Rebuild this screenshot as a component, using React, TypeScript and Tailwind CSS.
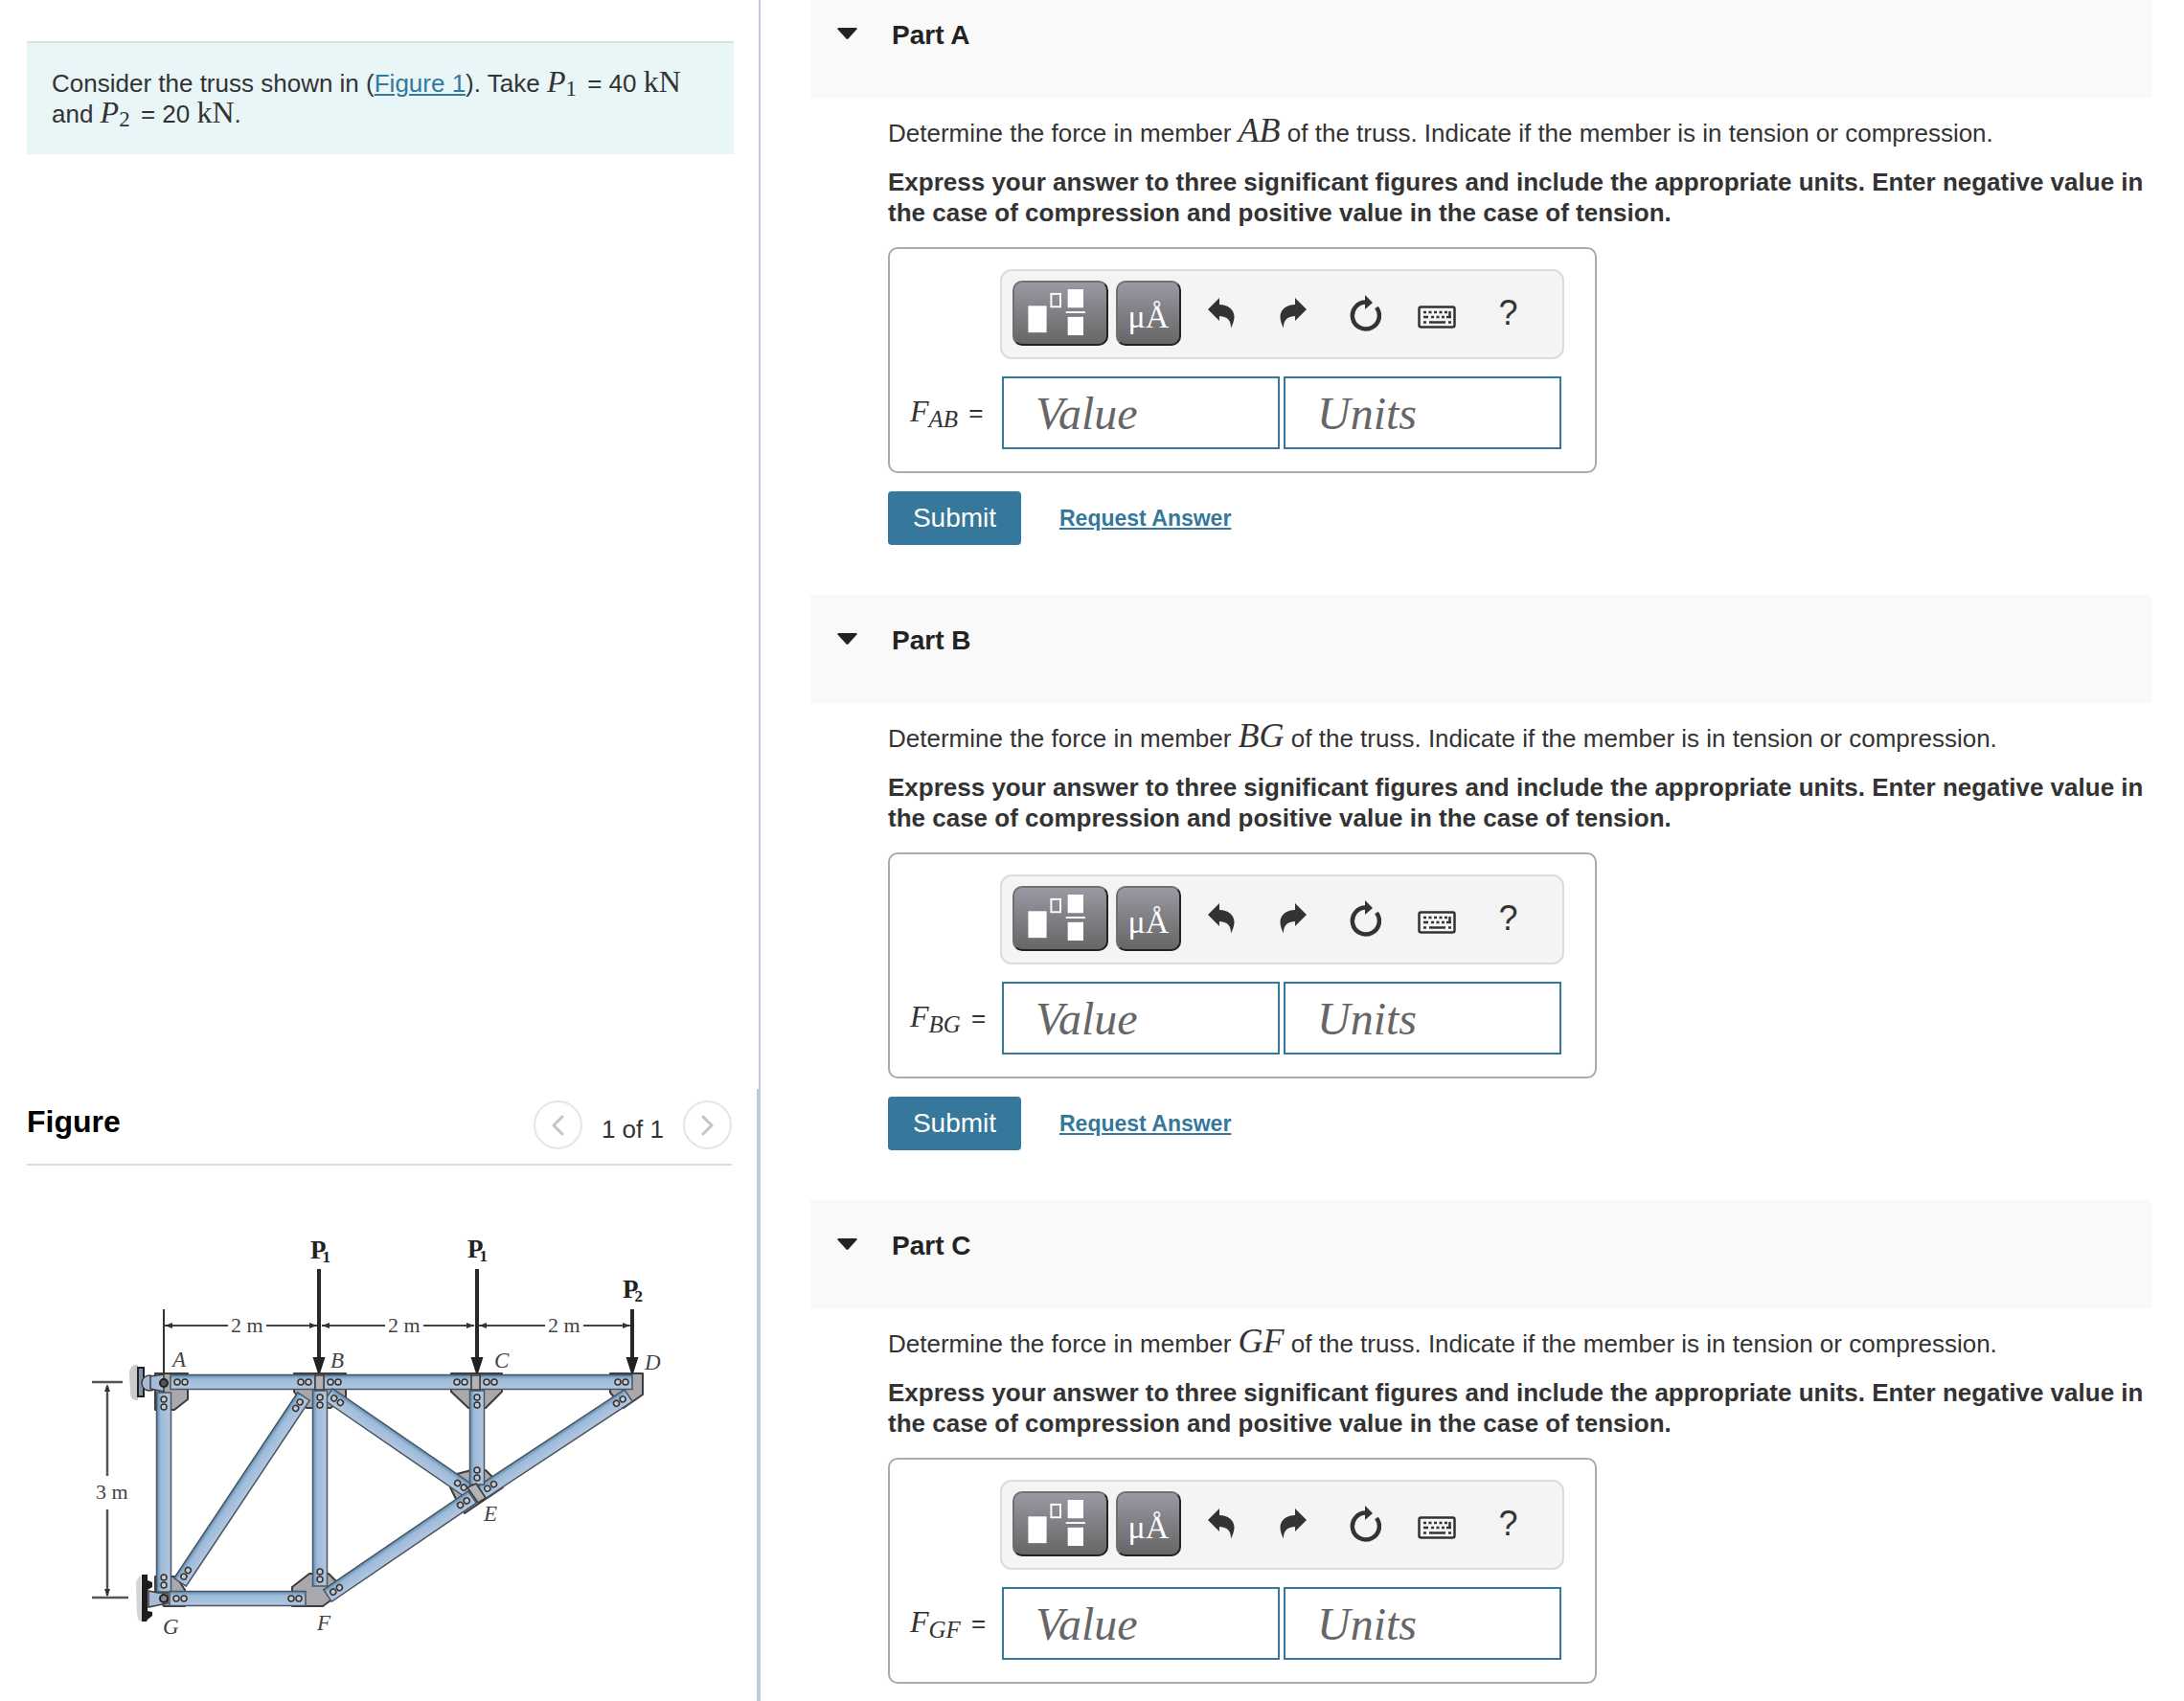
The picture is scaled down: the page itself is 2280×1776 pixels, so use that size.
import type { ReactNode } from "react";

type PartProps = {
  letter: string;
  member: string;
  actions?: boolean;
};

function Var({ children }: { children: ReactNode }) {
  return (
    <i className="font-['Liberation_Serif',serif] text-[36px] leading-[0]">{children}</i>
  );
}

function Load({ index, value }: { index: number; value: number }) {
  return (
    <span className="whitespace-nowrap">
      <i className="font-['Liberation_Serif',serif] text-[32px] leading-[0]">P</i>
      <sub className="-bottom-1 mr-1 font-['Liberation_Serif',serif] text-[23px]">{index}</sub> = {value}{" "}
      <span className="font-['Liberation_Serif',serif] text-[32px] leading-[0]">kN</span>
    </span>
  );
}

function TemplatesIcon() {
  return (
    <svg width="100" height="64" viewBox="0 0 100 64" fill="#fff" aria-hidden="true">
      <rect x="15" y="24" width="20" height="29" />
      <rect x="40" y="11" width="10" height="14" fill="none" stroke="#fff" strokeWidth="2" />
      <rect x="58" y="6" width="17" height="20" />
      <rect x="56" y="30" width="21" height="2" />
      <rect x="58" y="36" width="17" height="20" />
    </svg>
  );
}

function UndoIcon() {
  return (
    <svg width="28" height="32" viewBox="0 0 28 32" fill="#333" aria-hidden="true">
      <path d="M0 12 12 0v7c9 0 15 5 15.500 12 .2 4.500-1.500 8.500-3.500 12.500 .3-6-2-12-12-12.500v5z" />
    </svg>
  );
}

function RedoIcon() {
  return (
    <svg width="28" height="32" viewBox="0 0 28 32" fill="#333" aria-hidden="true">
      <path d="M28 12 16 0v7C7 7 1 12 .5 19c-.2 4.500 1.500 8.500 3.500 12.500-.3-6 2-12 12-12.500v5z" />
    </svg>
  );
}

function ResetIcon() {
  return (
    <svg width="34" height="38" viewBox="0 0 34 38" aria-hidden="true">
      <path d="M18 7.500A14 14 0 1 0 29 13" fill="none" stroke="#333" strokeWidth="4.500" />
      <path d="M17 0 25 8 17 15z" fill="#333" />
    </svg>
  );
}

function KeyboardIcon() {
  return (
    <svg width="40" height="24" viewBox="0 0 40 24" aria-hidden="true">
      <rect x="1.500" y="1.500" width="37" height="21" rx="2" fill="none" stroke="#333" strokeWidth="2.500" />
      <g stroke="#333" strokeWidth="2.500">
        <path d="M6 7h25" strokeDasharray="3 2.500" />
        <path d="M6 12h5M14 12h3M19.500 12h3M25 12h3M30 12h5M33.500 6v7" />
        <path d="M6 17.500h3M12 17.500h17M32 17.500h3" />
      </g>
    </svg>
  );
}

function ToolButton({ label, children }: { label: string; children: ReactNode }) {
  return (
    <button
      type="button"
      aria-label={label}
      className="flex h-[68px] w-[75px] items-center justify-center text-[#333]"
    >
      {children}
    </button>
  );
}

const paletteButton =
  "flex h-[68px] items-center justify-center rounded-[10px] border-2 border-t-[#707070] border-l-[#707070] border-r-[#222] border-b-[#222] bg-linear-to-b from-[#9b98a3] to-[#666] text-white";

function Toolbar() {
  return (
    <div className="ml-[94px] flex h-[94px] w-[589px] rounded-xl border-2 border-[#dcdcdc] bg-[#f4f4f4] py-[10px] pl-[11px]">
      <button type="button" aria-label="Templates" className={`${paletteButton} mr-2 w-[100px]`}>
        <TemplatesIcon />
      </button>
      <button
        type="button"
        aria-label="Symbols"
        className={`${paletteButton} mr-1 w-[68px] pt-2 font-['Liberation_Serif',serif] text-[34px]`}
      >
        μÅ
      </button>
      <ToolButton label="Undo">
        <UndoIcon />
      </ToolButton>
      <ToolButton label="Redo">
        <RedoIcon />
      </ToolButton>
      <ToolButton label="Reset">
        <ResetIcon />
      </ToolButton>
      <ToolButton label="Keyboard">
        <span className="pt-2">
          <KeyboardIcon />
        </span>
      </ToolButton>
      <ToolButton label="Help">
        <span className="text-[36px]">?</span>
      </ToolButton>
    </div>
  );
}

const answerInput =
  "h-[76px] w-[290px] border-2 border-[#35789b] bg-white px-[33px] font-['Liberation_Serif',serif] text-[48px] italic text-[#333] placeholder:text-[#666]";

function Part({ letter, member, actions = true }: PartProps) {
  const id = `value-${member}`;
  return (
    <section>
      <button type="button" className="flex h-[113px] w-full items-start bg-[#f9f9f9] text-left">
        <svg width="21" height="12" viewBox="0 0 21 12" className="mt-10 ml-7" aria-hidden="true">
          <path d="M1 0h19q1 .5 .5 1.500L11.500 11.500q-1 .8-2 0L.5 1.500Q0 .5 1 0z" fill="#222" />
        </svg>
        <span className="mt-8 ml-9 text-[28px] leading-8 font-bold text-[#222]">Part {letter}</span>
      </button>
      <div className={`pt-[21px] pl-[81px] ${actions ? "pb-[52px]" : ""}`}>
        <p>
          Determine the force in member <Var>{member}</Var> of the truss. Indicate if the member is in tension
          or compression.
        </p>
        <p className="mt-[19px] font-bold">
          Express your answer to three significant figures and include the appropriate units. Enter negative
          value in the case of compression and positive value in the case of tension.
        </p>
        <div className="mt-5 w-[740px] rounded-[10px] border-2 border-[#aaa] pt-[21px] pb-[23px] pl-[21px]">
          <Toolbar />
          <div className="mt-[18px] flex items-center">
            <label htmlFor={id} className="w-24 whitespace-nowrap">
              <i className="font-['Liberation_Serif',serif] text-[32px] leading-[0]">F</i>
              <sub className="mr-1 font-['Liberation_Serif',serif] text-[25px] italic">{member}</sub> =
            </label>
            <input id={id} type="text" placeholder="Value" className={`${answerInput} mr-1`} />
            <input type="text" placeholder="Units" aria-label="Units" className={answerInput} />
          </div>
        </div>
        {actions && (
          <div className="mt-[19px] flex items-center">
            <button type="button" className="h-14 w-[139px] rounded bg-[#35789b] text-[28px] text-white">
              Submit
            </button>
            <a href="#" className="ml-10 text-[23px] font-bold text-[#35789b] underline underline-offset-2">
              Request Answer
            </a>
          </div>
        )}
      </div>
    </section>
  );
}

// member of the truss, drawn along its own axis
function Beam({ x1, y1, x2, y2 }: { x1: number; y1: number; x2: number; y2: number }) {
  const length = Math.hypot(x2 - x1, y2 - y1);
  const angle = (Math.atan2(y2 - y1, x2 - x1) * 180) / Math.PI;
  return (
    <g transform={`translate(${x1} ${y1}) rotate(${angle})`}>
      <rect x="0" y="-7.500" width={length} height="15" fill="url(#steel)" stroke="#4b5661" strokeWidth="1.500" />
      {[7, 15, length - 15, length - 7].map((x) => (
        <circle key={x} cx={x} cy="0" r="3" fill="#c9c9cc" stroke="#333" strokeWidth="1.500" />
      ))}
    </g>
  );
}

function Arrow({ x, y }: { x: number; y: number }) {
  return (
    <g fill="#222">
      <path d={`M${x} ${y}V1420`} stroke="#2a2627" strokeWidth="4" />
      <path d={`M${x - 6.5} 1417h13l-5.500 17h-2z`} />
    </g>
  );
}

function DimensionLine({ x1, x2, textX }: { x1: number; x2: number; textX: number }) {
  return (
    <g>
      <path d={`M${x1} 1384H${textX - 3}M${textX + 37} 1384H${x2}`} stroke="#444" strokeWidth="2" />
      <path d={`M${x1} 1384l8-3v6zM${x2} 1384l-8-3v6z`} fill="#333" />
      <text x={textX} y="1391" fontSize="22" fill="#444">
        2 m
      </text>
    </g>
  );
}

const joints = [
  { name: "A", x: 180, y: 1427 },
  { name: "B", x: 345, y: 1428 },
  { name: "C", x: 516, y: 1428 },
  { name: "D", x: 673, y: 1430 },
  { name: "E", x: 505, y: 1588 },
  { name: "F", x: 331, y: 1702 },
  { name: "G", x: 170, y: 1706 },
];

const loads = [
  { x: 324, y: 1314, index: 1 },
  { x: 488, y: 1313, index: 1 },
  { x: 650, y: 1355, index: 2 },
];

function Truss() {
  return (
    <svg
      viewBox="80 1270 640 460"
      className="mt-[53px] ml-[52px] w-[640px]"
      fontFamily="Liberation Serif, serif"
      role="img"
      aria-label="Truss with members AB, BC, CD, AG, BG, BF, BE, CE, DE, EF and FG"
    >
      <defs>
        <linearGradient id="steel" x1="0" y1="0" x2="0" y2="1">
          <stop offset="0" stopColor="#5f8db3" />
          <stop offset="0.3" stopColor="#9dbbd9" />
          <stop offset="1" stopColor="#b3c6e0" />
        </linearGradient>
      </defs>

      {/* supports */}
      <path d="M144 1425q-8-1-9 8l1 20q0 10 8 9z" fill="#c9cbcd" />
      <rect x="144" y="1428" width="6" height="30" fill="#7f93aa" stroke="#222" strokeWidth="2" />
      <path d="M147 1645q-6 4-5 12l1 28q1 8 5 8z" fill="#d2d6d8" />
      <path d="M148 1644h6v6l5 2v5l-5 3v22l5 1v4l-5 4-1 2h-5z" fill="#1f1c1d" />

      {/* gusset plates */}
      <g fill="#a9a9ad" stroke="#3c3c3e" strokeWidth="2" strokeLinejoin="round">
        <path d="M162 1434h34v27l-14 11h-20z" />
        <path d="M307 1434h54v25l-16 11h-25l-13-17z" />
        <path d="M471 1434h53v19l-17 17h-18l-18-17z" />
        <path d="M637 1434h34v22l-20 14-14-16z" />
        <path d="M477 1539l15-4h15l18 18-40 27-8-13-7-14z" />
        <path d="M305 1657l18-14h20l17 17-23 17h-32z" />
        <path d="M162 1646h22l9 14v17h-22l-9-15z" />
      </g>

      {/* members */}
      <Beam x1={178} y1={1443} x2={329} y2={1443} />
      <Beam x1={338} y1={1443} x2={492} y2={1443} />
      <Beam x1={501} y1={1443} x2={660} y2={1443} />
      <Beam x1={188} y1={1652} x2={317} y2={1458} />
      <Beam x1={343} y1={1456} x2={490} y2={1557} />
      <Beam x1={503} y1={1558} x2={656} y2={1457} />
      <Beam x1={342} y1={1666} x2={493} y2={1563} />
      <Beam x1={171} y1={1662} x2={171} y2={1454} />
      <Beam x1={334} y1={1656} x2={334} y2={1452} />
      <Beam x1={498} y1={1550} x2={498} y2={1452} />
      <Beam x1={177} y1={1669} x2={319} y2={1669} />

      {/* pins and joint covers */}
      <g fill="#b3b3b6" stroke="#3c3c3e" strokeWidth="1.500">
        <rect x="329" y="1436" width="9" height="15" />
        <rect x="492" y="1436" width="9" height="15" />
        <path d="M488 1553l9-4 10 15-8 5z" />
        <path d="M155 1661l10 2h10v11l-20 4z" fill="#a5bbd6" />
        <circle cx="156" cy="1444" r="8" fill="#a5bbd6" />
        <path d="M157 1437l14-2v18l-14-3z" fill="#a5bbd6" />
        <circle cx="171" cy="1444" r="4" fill="#555" stroke="#222" strokeWidth="2" />
        <circle cx="171" cy="1669" r="4" fill="#888" stroke="#222" strokeWidth="2" />
      </g>

      {/* dimensions */}
      <path d="M171 1367v67" stroke="#333" strokeWidth="2" />
      <DimensionLine x1={172} x2={331} textX={241} />
      <DimensionLine x1={336} x2={495} textX={405} />
      <DimensionLine x1={500} x2={658} textX={572} />
      <path
        d="M96 1443h32M96 1668h38M112 1447v94M112 1576v90"
        fill="none"
        stroke="#555"
        strokeWidth="2.500"
      />
      <path d="M112 1445l-3 8h6zM112 1667l-3-8h6z" fill="#333" />
      <text x="100" y="1565" fontSize="22" fill="#444">
        3 m
      </text>

      {/* loads */}
      <Arrow x={333} y={1325} />
      <Arrow x={498} y={1325} />
      <Arrow x={660} y={1367} />
      {loads.map((load) => (
        <text key={load.x} x={load.x} y={load.y} fontSize="27" fontWeight="bold" fill="#222">
          P
          <tspan fontSize="17" dx="-4" dy="4">
            {load.index}
          </tspan>
        </text>
      ))}

      {joints.map((joint) => (
        <text key={joint.name} x={joint.x} y={joint.y} fontSize="23" fontStyle="italic" fill="#444">
          {joint.name}
        </text>
      ))}
    </svg>
  );
}

function Chevron({ d }: { d: string }) {
  return (
    <svg width="14" height="22" viewBox="0 0 14 22" fill="none" stroke="#c4c4c4" strokeWidth="3" aria-hidden="true">
      <path d={d} strokeLinecap="round" strokeLinejoin="round" />
    </svg>
  );
}

const roundButton = "flex size-[51px] items-center justify-center rounded-full border-2 border-[#e6e6e6]";

function FigurePanel() {
  return (
    <section className="h-[639px] border-r-4 border-[#bccadb] pr-[26px] pl-7">
      <div className="flex h-20 items-start border-b-2 border-[#dedede] pt-3">
        <h2 className="mt-0.5 text-[32px] leading-10 font-bold text-black">Figure</h2>
        <div className="ml-auto flex items-center">
          <button type="button" aria-label="Previous figure" className={roundButton}>
            <Chevron d="M12 2 3 11l9 9" />
          </button>
          <span className="mx-5 pt-2">1 of 1</span>
          <button type="button" aria-label="Next figure" className={roundButton}>
            <Chevron d="M2 2l9 9-9 9" />
          </button>
        </div>
      </div>
      <Truss />
    </section>
  );
}

export default function App() {
  return (
    <div className="grid h-screen grid-cols-[397fr_743fr] grid-rows-1 overflow-hidden bg-white font-['Liberation_Sans',Arial,sans-serif] text-[26px] leading-8 text-[#333]">
      <aside className="flex min-w-0 flex-col">
        <div className="flex-1 border-r-2 border-[#bccadb] pt-[43px] pr-[26px] pl-7">
          <p className="border-t-2 border-[#dcdfde] bg-[#e8f6f7] px-[26px] pt-[26px] pb-[26px]">
            Consider the truss shown in (
            <a href="#" className="text-[#35789b] underline underline-offset-2">
              Figure 1
            </a>
            ). Take <Load index={1} value={40} /> and <Load index={2} value={20} />.
          </p>
        </div>
        <FigurePanel />
      </aside>
      <main className="-mt-[11px] min-w-0 pr-[34px] pl-[52px]">
        <Part letter="A" member="AB" />
        <Part letter="B" member="BG" />
        <Part letter="C" member="GF" actions={false} />
      </main>
    </div>
  );
}
